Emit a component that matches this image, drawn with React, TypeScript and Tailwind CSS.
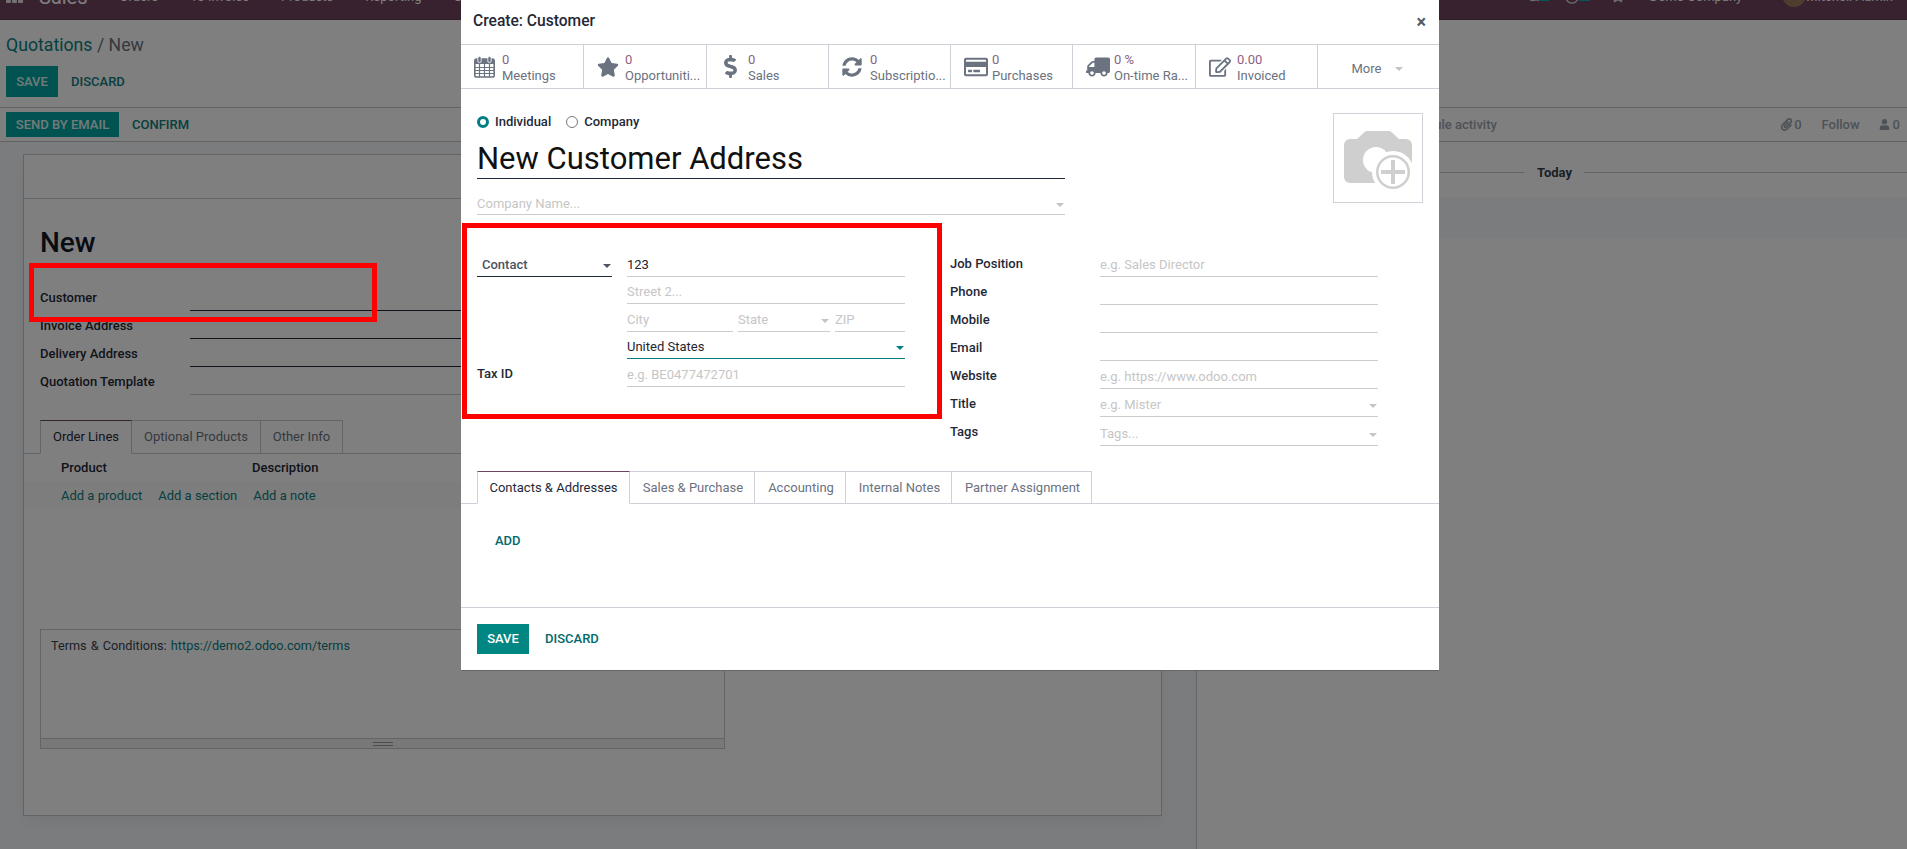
import React from "react";
import {
  FaStar,
  FaDollarSign,
  FaSyncAlt,
  FaRegCreditCard,
  FaTruck,
  FaRegEdit,
  FaPaperclip,
  FaUser,
  FaTh,
  FaComments,
  FaRegClock,
} from "react-icons/fa";

const Arrow = ({ className = "border-t-[#c4c4c4]" }: { className?: string }) => (
  <span className={`w-0 h-0 border-x-[4px] border-x-transparent border-t-[4px] ${className}`} />
);

function CalendarIcon() {
  return (
    <svg width="21" height="22" viewBox="0 0 21 22" fill="none">
      <rect x="0.800" y="3" width="19.400" height="18" rx="1.800" fill="#fff" stroke="#6b7280" strokeWidth="1.600" />
      <rect x="1" y="3" width="19" height="5" fill="#6b7280" />
      <path d="M1 11.500h19M1 14.500h19M1 17.500h19M5.500 8v13M10.500 8v13M15.500 8v13" stroke="#6b7280" strokeWidth="1.200" />
      <rect x="3.800" y="0.500" width="3.400" height="6" rx="1.500" fill="#6b7280" stroke="#fff" strokeWidth="0.800" />
      <rect x="13.800" y="0.500" width="3.400" height="6" rx="1.500" fill="#6b7280" stroke="#fff" strokeWidth="0.800" />
    </svg>
  );
}

function UnderField({
  text,
  placeholder,
  arrow,
  width = "w-full",
  line = "border-[#ccc]",
  arrowClass,
  h = "h-7",
  pb = "pb-[3px]",
}: {
  text?: string;
  placeholder?: string;
  arrow?: boolean;
  width?: string;
  line?: string;
  arrowClass?: string;
  h?: string;
  pb?: string;
}) {
  return (
    <div className={`${h} ${width} flex items-end justify-between border-b ${line} ${pb}`}>
      {text ? (
        <span className="text-[#1f2430] leading-[16px]">{text}</span>
      ) : (
        <span className="text-[#c6c6c6] leading-[16px]">{placeholder}</span>
      )}
      {arrow && (
        <span className="mb-[5px] mr-px flex">
          <Arrow className={arrowClass} />
        </span>
      )}
    </div>
  );
}

const stat = [
  { icon: <CalendarIcon />, n: "0", l: "Meetings" },
  { icon: <FaStar size={22} />, n: "0", l: "Opportuniti..." },
  { icon: <FaDollarSign size={23} className="-ml-px" />, n: "0", l: "Sales" },
  { icon: <FaSyncAlt size={20} />, n: "0", l: "Subscriptio..." },
  { icon: <FaRegCreditCard size={24} />, n: "0", l: "Purchases" },
  { icon: <FaTruck size={24} className="-scale-x-100" />, n: "0 %", l: "On-time Ra..." },
  { icon: <FaRegEdit size={22} />, n: "0.00", l: "Invoiced" },
];

const rightFields: { label: string; placeholder?: string; arrow?: boolean; h?: string }[] = [
  { label: "Job Position", placeholder: "e.g. Sales Director" },
  { label: "Phone" },
  { label: "Mobile" },
  { label: "Email" },
  { label: "Website", placeholder: "e.g. https://www.odoo.com" },
  { label: "Title", placeholder: "e.g. Mister", arrow: true },
  { label: "Tags", placeholder: "Tags...", arrow: true, h: "h-[29px]" },
];

function Background() {
  return (
    <div className="h-[849px] flex flex-col bg-white overflow-hidden">
      <div className="h-[20px] bg-[#70445e] text-white overflow-hidden flex items-end shrink-0 border-b border-[#5e3a50]">
        <div className="flex items-end h-[40px] mb-[6px] w-full pl-[6px]">
          <FaTh size={17} className="mb-[9px] text-[#e8e0e4]" />
          <span className="ml-[16px] text-[20px] leading-[26px] mb-[3px]">Sales</span>
          <span className="ml-[32px] text-[13px] leading-[20px] mb-[6px]">Orders</span>
          <span className="ml-[32px] text-[13px] leading-[20px] mb-[6px]">To Invoice</span>
          <span className="ml-[32px] text-[13px] leading-[20px] mb-[6px]">Products</span>
          <span className="ml-[32px] text-[13px] leading-[20px] mb-[6px]">Reporting</span>
          <span className="ml-[32px] text-[13px] leading-[20px] mb-[6px]">Configuration</span>
          <span className="ml-auto flex items-end mr-[14px] text-[13px] leading-[20px] mb-[6px]">
            <FaComments size={16} className="mb-[4px] text-[#d8d8d8]" />
            <span className="w-[10px] h-[12px] bg-[#00b0b0] mb-[6px]" />
            <FaRegClock size={14} className="ml-[16px] mb-[3px] text-[#d8d8d8]" />
            <span className="w-[11px] h-[12px] bg-[#00b0b0] mb-[6px]" />
            <FaStar size={14} className="ml-[21px] mb-[4px] text-[#d8d8d8]" />
            <span className="ml-[25px] mr-[40px]">Demo Company</span>
            <span className="w-[24px] h-[24px] rounded-full bg-[#a07a60]" />
            <span>Mitchell Admin</span>
          </span>
        </div>
      </div>

      <div className="shrink-0 bg-white">
        <div className="h-[88px] border-b border-[#c0c4c8] pl-[6px]">
          <div className="pt-[13px] text-[17.700px] leading-[24px] text-[#6b7280]">
            <span className="text-[#0b807e]">Quotations</span> / New
          </div>
          <div className="mt-[9px] flex items-center font-medium text-[13px]">
            <span className="h-[31px] w-[52px] bg-[#00a6a3] text-white/90 flex items-center justify-center">SAVE</span>
            <span className="ml-[13px] text-[#0b807e]">DISCARD</span>
          </div>
        </div>
        <div className="h-[34px] border-b border-[#c0c4c8] flex items-center pl-[6px] pr-[7px] font-medium text-[13px]">
          <span className="h-[25px] w-[113px] bg-[#00a6a3] text-white/90 flex items-center justify-center">SEND BY EMAIL</span>
          <span className="ml-[13px] text-[#0b807e]">CONFIRM</span>
          <span className="ml-[1209px] text-[#9ca3af] whitespace-nowrap">Schedule activity</span>
          <span className="ml-auto flex items-center text-[#9ca3af]">
            <FaPaperclip size={13} className="mr-[1px]" />0
            <span className="ml-[20px]">Follow</span>
            <FaUser size={11} className="ml-[19px] mr-[3px]" />0
          </span>
        </div>
      </div>

      <div className="flex-1 flex min-h-0">
        <div className="w-[1196px] shrink-0 bg-[#f6f9fb] pt-[12px] pl-[23px] pr-[34px]">
          <div className="h-[662px] bg-white border border-[#c4c8cc] flex flex-col shadow-[0_6px_14px_rgba(0,0,0,0.05)]">
            <div className="h-[44px] border-b border-[#c4c8cc]" />
            <div className="pl-[16px] text-[13px] text-[#1f2937]">
              <div className="mt-[26px] text-[28px] leading-[36px] font-medium text-[#111827]">New</div>
              {["Customer", "Invoice Address", "Delivery Address", "Quotation Template"].map((l, i) => (
                <div key={l} className={`h-[28px] flex items-center font-medium ${i === 0 ? "mt-[22px]" : ""}`}>
                  <span className="w-[150px] shrink-0 pt-[2px]">{l}</span>
                  <span className={`w-[320px] self-stretch border-b ${i === 3 ? "border-[#c4c8cc]" : "border-[#1f2937]"}`} />
                </div>
              ))}
            </div>
            <div className="mt-[25px] border-b border-[#c4c8cc] h-[34px] pl-[16px] flex items-end text-[13px]">
              <span className="h-[34px] w-[92px] border border-[#c4c8cc] border-b-white border-t-[#70445e] flex items-center justify-center bg-white text-[#1f2937] -mb-px">Order Lines</span>
              <span className="h-[34px] w-[129px] border border-l-0 border-[#c4c8cc] flex items-center justify-center text-[#6b7280] -mb-px">Optional Products</span>
              <span className="h-[34px] w-[82px] border border-l-0 border-[#c4c8cc] flex items-center justify-center text-[#6b7280] -mb-px">Other Info</span>
            </div>
            <div className="h-[28px] flex items-center pl-[37px] text-[13px] font-medium text-[#1f2937]">
              <span className="w-[191px]">Product</span>
              <span>Description</span>
            </div>
            <div className="h-[26px] pt-[2px] flex items-center pl-[37px] text-[13px] text-[#0b807e] bg-[#fbfbfb]">
              <span>Add a product</span>
              <span className="ml-[16px]">Add a section</span>
              <span className="ml-[16px]">Add a note</span>
            </div>
            <div className="mt-[121px] ml-[16px] w-[685px] h-[120px] border border-[#c4c8cc] flex flex-col text-[12.700px] text-[#374151]">
              <div className="flex-1 pl-[10px] pt-[6px] [word-spacing:1px]">
                Terms &amp; Conditions: <span className="text-[#0b807e] [word-spacing:0]">https://demo2.odoo.com/terms</span>
              </div>
              <div className="h-[10px] bg-[#f0f0f0] border-t border-[#c4c8cc] flex justify-center items-center">
                <span className="w-[20px] h-[4px] border-y border-[#999]" />
              </div>
            </div>
          </div>
        </div>
        <div className="flex-1 border-l border-[#c4c8cc] bg-white">
          <div className="h-[55px] pt-[6px] flex items-center text-[13px] pl-[243px]">
            <span className="h-px w-[84px] bg-[#c4c8cc]" />
            <span className="px-[13px] font-bold text-[#374151] w-[60px] whitespace-nowrap">Today</span>
            <span className="h-px flex-1 bg-[#c4c8cc]" />
          </div>
          <div className="h-[41px] bg-[#f6f9fb]" />
        </div>
      </div>
    </div>
  );
}

function CameraPlus() {
  return (
    <svg width="70" height="62" viewBox="0 0 70 62" className="mt-[16px] ml-[10px]">
      <path
        d="M23 1h22a4 4 0 0 1 3 1.500L55 9h7a6 6 0 0 1 6 6v32a6 6 0 0 1-6 6H6a6 6 0 0 1-6-6V15a6 6 0 0 1 6-6h7l7-6.500A4 4 0 0 1 23 1z"
        fill="#cfcfcf"
      />
      <circle cx="32" cy="30" r="13" fill="#fff" />
      <circle cx="49" cy="42" r="19" fill="#cfcfcf" stroke="#fff" strokeWidth="4" />
      <circle cx="49" cy="42" r="14.500" fill="#fff" />
      <rect x="47" y="30" width="4" height="24" fill="#cfcfcf" />
      <rect x="37" y="40" width="24" height="4" fill="#cfcfcf" />
    </svg>
  );
}

function Modal() {
  return (
    <div className="fixed left-[461px] top-0 w-[978px] h-[671px] bg-white border-b border-[#666] flex flex-col text-[13px] z-20">
      <div className="h-[45px] shrink-0 flex items-center justify-between pl-[12px] pr-[13px] border-b border-[#ced2d8]">
        <span className="text-[15.600px] font-medium text-[#1f2937]">Create: Customer</span>
        <span className="text-[18px] font-bold text-[#555b66] leading-none">×</span>
      </div>
      <div className="h-[44px] shrink-0 grid grid-cols-[123px_123px_122px_122px_122px_123px_122px_1fr] border-b border-[#ced2d8]">
        {stat.map((s) => (
          <div key={s.l} className="border-r border-[#ced2d8] flex items-center pl-[13px] min-w-0">
            <span className="w-[28px] shrink-0 flex justify-start text-[#6b7280]">{s.icon}</span>
            <div className="leading-[16px] pt-[3px] whitespace-nowrap">
              <div className="text-[#8a6283]">{s.n}</div>
              <div className="text-[#6b7280]">{s.l}</div>
            </div>
          </div>
        ))}
        <div className="flex items-center justify-center gap-[14px] text-[#6b7280] pr-[2px] pt-[4px]">
          More <Arrow />
        </div>
      </div>

      <div className="flex-1 min-h-0 flex flex-col">
        <div className="flex pl-[16px] pr-[16px] pt-[24px] shrink-0">
          <div className="w-[588px]">
            <div className="h-[18px] flex items-center font-medium text-[#1f2937]">
              <span className="w-[12px] h-[12px] rounded-full border-[3.500px] border-[#017e84] bg-white" />
              <span className="ml-[6px]">Individual</span>
              <span className="ml-[15px] w-[12px] h-[12px] rounded-full border border-[#777]" />
              <span className="ml-[6px]">Company</span>
            </div>
            <div className="h-[48px] flex items-end border-b border-[#1f2937] text-[31px] leading-[38px] text-[#111]">
              New Customer Address
            </div>
            <UnderField placeholder="Company Name..." arrow h="h-[36px]" pb="pb-[2px]" />
          </div>
          <div className="ml-auto w-[90px] h-[90px] border border-[#ced2d8]">
            <CameraPlus />
          </div>
        </div>

        <div className="flex pl-[16px] mt-[-56px] pt-[90px] shrink-0">
          <div className="w-[473px] shrink-0 flex">
            <div className="w-[150px] shrink-0 flex flex-col">
              <div className="w-[135px]">
                <div className="h-7 flex items-end justify-between border-b border-[#1f2937] pb-[3px] pl-[5px] text-[#4b5563] font-medium">
                  <span className="leading-[16px]">Contact</span>
                  <span className="mb-[5px] mr-px flex">
                    <Arrow className="border-t-[#4b5563]" />
                  </span>
                </div>
              </div>
              <div className="mt-[89px] font-medium text-[#1f2937] leading-[16px]">Tax ID</div>
            </div>
            <div className="w-[278px] flex flex-col">
              <UnderField text="123" />
              <UnderField placeholder="Street 2..." h="h-[27px]" />
              <div className="flex gap-[5px]">
                <UnderField placeholder="City" width="w-[106px]" />
                <UnderField placeholder="State" width="w-[92px]" arrow />
                <UnderField placeholder="ZIP" width="w-[70px]" />
              </div>
              <UnderField text="United States" arrow h="h-[27px]" line="border-[#017e84]" arrowClass="border-t-[#017e84]" />
              <UnderField placeholder="e.g. BE0477472701" />
            </div>
          </div>
          <div className="flex flex-col">
            {rightFields.map((f) => (
              <div key={f.label} className="flex">
                <span className={`w-[150px] shrink-0 font-medium text-[#1f2937] leading-[30px] ${f.h ?? "h-7"}`}>{f.label}</span>
                <UnderField placeholder={f.placeholder} arrow={f.arrow} width="w-[278px]" h={f.h} />
              </div>
            ))}
          </div>
        </div>

        <div className="mt-[25px] h-[33px] shrink-0 border-b border-[#ced2d8] pl-[16px] flex items-end">
          <span className="h-[33px] w-[153px] -mb-px bg-white border border-[#ced2d8] border-t-[#70445e] border-b-white flex items-center justify-center text-[#1f2937]">Contacts &amp; Addresses</span>
          {[
            ["Sales & Purchase", "w-[125px]"],
            ["Accounting", "w-[91px]"],
            ["Internal Notes", "w-[106px]"],
            ["Partner Assignment", "w-[140px]"],
          ].map(([t, w]) => (
            <span key={t} className={`h-[33px] ${w} -mb-px pl-[2px] border border-l-0 border-[#ced2d8] flex items-center justify-center text-[#6b7280]`}>{t}</span>
          ))}
        </div>
        <div className="pl-[34px] pt-[27px] font-medium text-[#00696b]">ADD</div>
      </div>

      <div className="h-[63px] shrink-0 border-t border-[#ced2d8] pl-[16px] flex items-center font-medium">
        <span className="h-[30px] w-[52px] bg-[#008784] text-white flex items-center justify-center">SAVE</span>
        <span className="ml-[16px] text-[#00696b]">DISCARD</span>
      </div>
    </div>
  );
}

export default function App() {
  return (
    <div className="relative w-[1907px] h-[849px] overflow-hidden font-['Roboto',sans-serif] text-[13px]">
      <Background />
      <div className="fixed inset-0 bg-black/50 z-10" />
      <Modal />
      <div className="fixed left-[29px] top-[263px] w-[348px] h-[59px] border-[5px] border-[#ff0000] z-30" />
      <div className="fixed left-[462px] top-[223px] w-[480px] h-[196px] border-[5px] border-[#ff0000] z-30" />
    </div>
  );
}
